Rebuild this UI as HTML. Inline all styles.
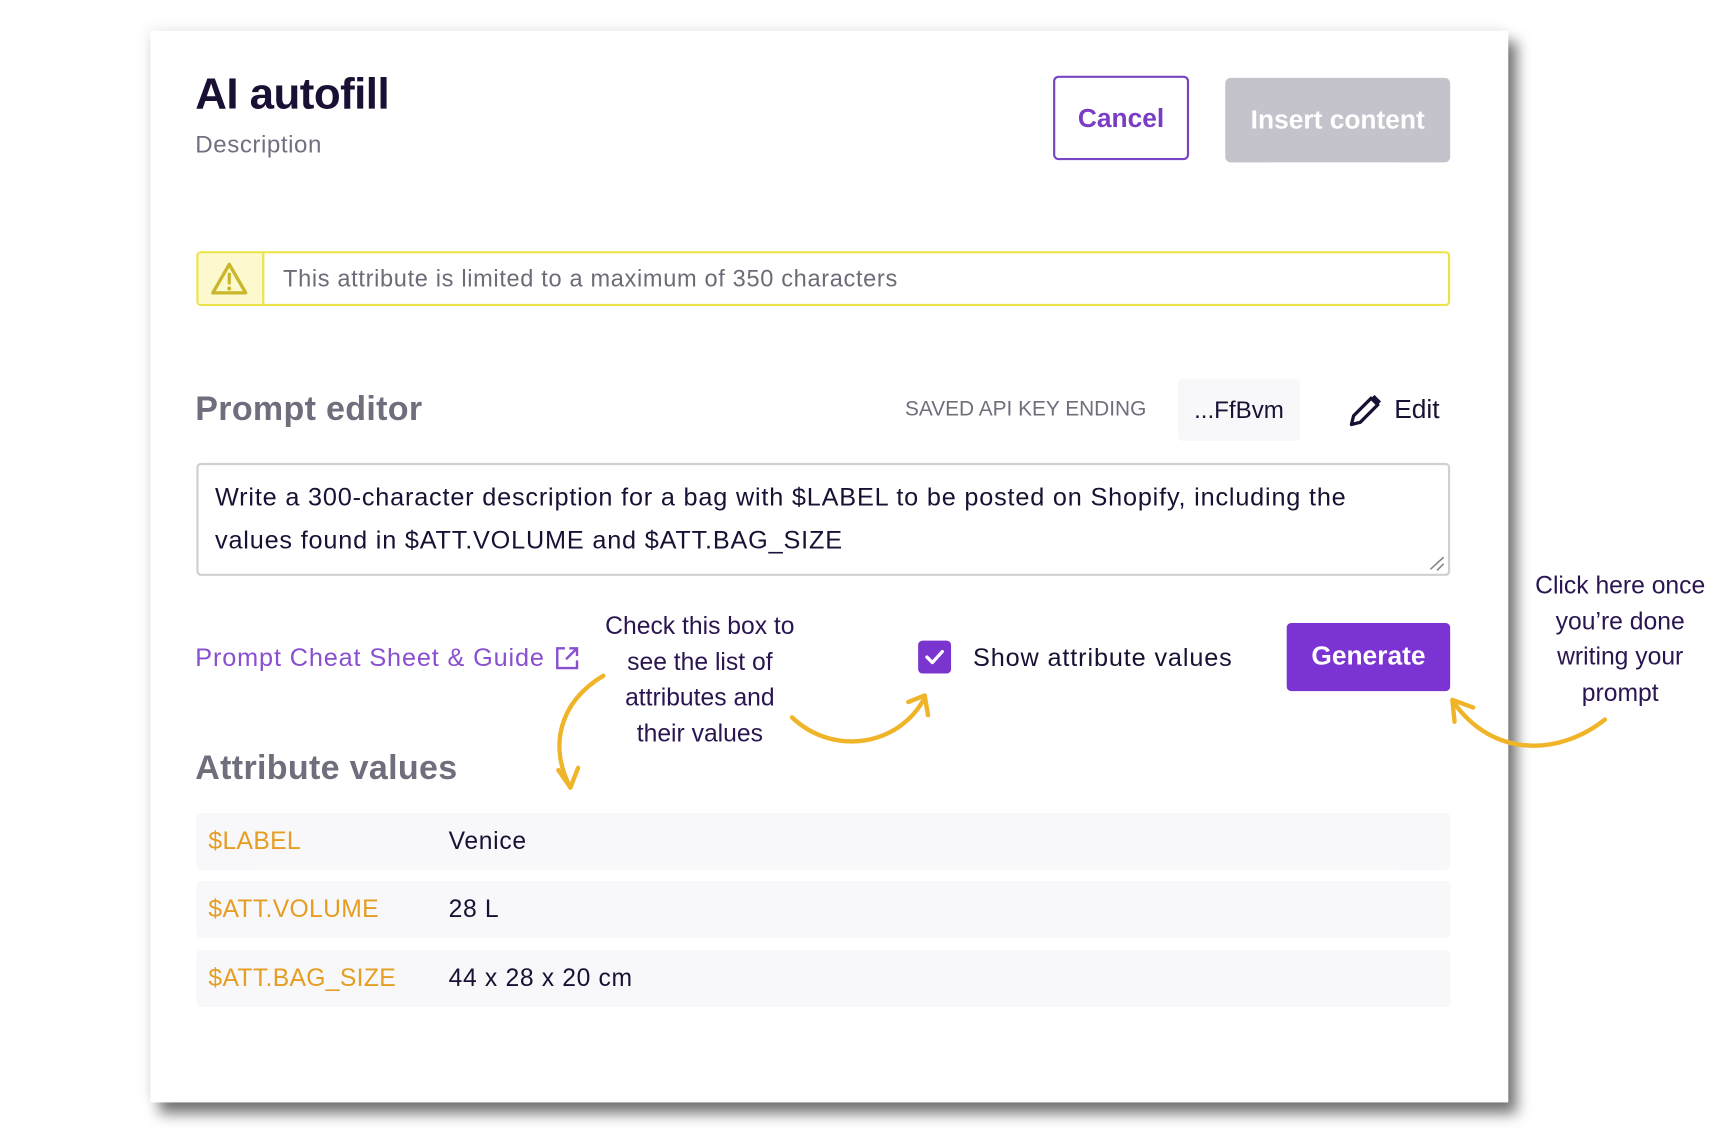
<!DOCTYPE html>
<html><head><meta charset="utf-8">
<style>
html,body{margin:0;padding:0;background:#fff;width:1720px;height:1146px;overflow:hidden}
#w{position:absolute;left:0;top:0;width:1568px;height:1045px;transform:scale(1.09694);transform-origin:0 0;font-family:"Liberation Sans",sans-serif}
.a{position:absolute;white-space:nowrap}
.card{position:absolute;left:137px;top:28px;width:1238px;height:977px;background:#fff;box-shadow:8px 10px 12px rgba(0,0,0,.55),-2px -2px 10px rgba(0,0,0,.08)}
.note{position:absolute;color:#2a1550;font-size:22.5px;line-height:32.5px;text-align:center}
.row{position:absolute;left:179px;width:1143px;height:52px;background:#f8f8fa;border-radius:4px}
.row .k{position:absolute;left:11px;top:13px;color:#e59d22;font-size:22.5px;letter-spacing:0.3px}
.row .v{position:absolute;left:230px;top:13px;color:#1a1033;font-size:22.5px;letter-spacing:0.6px}
</style></head><body><div id="w">
<div class="card"></div>
<div class="a" style="left:178px;top:64px;font-size:40px;font-weight:bold;color:#1a1033;letter-spacing:-0.5px">AI autofill</div>
<div class="a" style="left:178px;top:119px;font-size:22px;color:#707080;letter-spacing:0.5px">Description</div>
<div class="a" style="left:960px;top:69px;width:120px;height:73px;border:2px solid #7a45c2;border-radius:5px;color:#7a3cc4;font-size:24px;font-weight:bold;text-align:center;line-height:76px">Cancel</div>
<div class="a" style="left:1117px;top:71px;width:205px;height:77px;background:#c4c2cb;border-radius:5px;color:#fff;font-size:24px;font-weight:bold;text-align:center;line-height:77px">Insert content</div>
<div class="a" style="left:179px;top:229px;width:1139px;height:46px;border:2px solid #ece34a;border-radius:4px;background:#fff"></div>
<div class="a" style="left:181px;top:231px;width:58px;height:46px;background:#fdf9cf;border-right:2px solid #ece34a"></div>
<svg class="a" style="left:191px;top:238px" width="36" height="32" viewBox="0 0 36 32"><path d="M18 3 L33 29 H3 Z" fill="none" stroke="#c9b62a" stroke-width="3" stroke-linejoin="round"/><path d="M18 12 V20" stroke="#c9b62a" stroke-width="3" stroke-linecap="round"/><circle cx="18" cy="25" r="1.8" fill="#c9b62a"/></svg>
<div class="a" style="left:258px;top:242px;font-size:21.5px;color:#6c6c78;letter-spacing:0.6px">This attribute is limited to a maximum of 350 characters</div>
<div class="a" style="left:178px;top:355px;font-size:31px;font-weight:bold;color:#6e6e7c;letter-spacing:0.3px">Prompt editor</div>
<div class="a" style="left:825px;top:363px;font-size:19px;color:#6e6e7c">SAVED API KEY ENDING</div>
<div class="a" style="left:1074px;top:345px;width:111px;height:57px;background:#f8f8fa;border-radius:4px;font-size:22px;color:#1a1033;text-align:center;line-height:57px">...FfBvm</div>
<svg class="a" style="left:1228px;top:358px" width="34" height="32" viewBox="0 0 34 32"><path d="M4 29 L6 21 L22 5 L28 11 L12 27 Z" fill="none" stroke="#1a1033" stroke-width="3" stroke-linejoin="round"/><path d="M22 5 L25 2 L31 8 L28 11 Z" fill="#1a1033"/></svg>
<div class="a" style="left:1271px;top:360px;font-size:24px;color:#1a1033">Edit</div>
<div class="a" style="left:179px;top:422px;width:1139px;height:99px;border:2px solid #cfcfd4;border-radius:4px"></div>
<svg class="a" style="left:1302px;top:507px" width="16" height="14"><path d="M2 12 L14 1 M8 13 L14 7" stroke="#888" stroke-width="1.5"/></svg>
<div class="a" style="left:196px;top:434px;font-size:23px;color:#1a1033;line-height:39px;letter-spacing:0.75px">Write a 300-character description for a bag with $LABEL to be posted on Shopify, including the<br>values found in $ATT.VOLUME and $ATT.BAG_SIZE</div>
<div class="a" style="left:178px;top:586px;font-size:23px;color:#8a4fcf;letter-spacing:0.8px">Prompt Cheat Sheet &amp; Guide</div>
<svg class="a" style="left:505px;top:588px" width="24" height="24" viewBox="0 0 24 24"><path d="M10 3 H3 V21 H21 V14" fill="none" stroke="#8a4fcf" stroke-width="2.2"/><path d="M14 3 H21 V10 M21 3 L11 13" fill="none" stroke="#8a4fcf" stroke-width="2.2"/></svg>
<div class="note" style="left:528px;top:555px;width:220px">Check this box to<br>see the list of<br>attributes and<br>their values</div>
<div class="a" style="left:837px;top:584px;width:30px;height:30px;background:#7b35cf;border-radius:4px"></div>
<svg class="a" style="left:837px;top:584px" width="30" height="30"><path d="M8 15 L13 20 L22 10" fill="none" stroke="#fff" stroke-width="3" stroke-linecap="round" stroke-linejoin="round"/></svg>
<div class="a" style="left:887px;top:586px;font-size:23px;color:#1a1033;letter-spacing:0.8px">Show attribute values</div>
<div class="a" style="left:1173px;top:568px;width:149px;height:62px;background:#7b33d3;border-radius:4px;color:#fff;font-size:24px;font-weight:bold;text-align:center;line-height:62px">Generate</div>
<div class="note" style="left:1377px;top:518px;width:200px">Click here once<br>you’re done<br>writing your<br>prompt</div>
<svg class="a" style="left:0;top:0" width="1568" height="1045">
<g fill="none" stroke="#f0b429" stroke-width="4" stroke-linecap="round" stroke-linejoin="round">
<path d="M550 616 C510 640 500 680 520 718"/><path d="M509 702 L520 718 L527 700"/>
<path d="M722 654 C760 690 820 680 843 636"/><path d="M828 640 L843 634 L846 652"/>
<path d="M1463 656 C1420 690 1360 690 1325 640"/><path d="M1326 658 L1324 638 L1343 645"/>
</g></svg>
<div class="a" style="left:178px;top:682px;font-size:31px;font-weight:bold;color:#6e6e7c;letter-spacing:0.3px">Attribute values</div>
<div class="row" style="top:741px"><span class="k">$LABEL</span><span class="v">Venice</span></div>
<div class="row" style="top:803px"><span class="k">$ATT.VOLUME</span><span class="v">28 L</span></div>
<div class="row" style="top:866px"><span class="k">$ATT.BAG_SIZE</span><span class="v">44 x 28 x 20 cm</span></div>
</div></body></html>
